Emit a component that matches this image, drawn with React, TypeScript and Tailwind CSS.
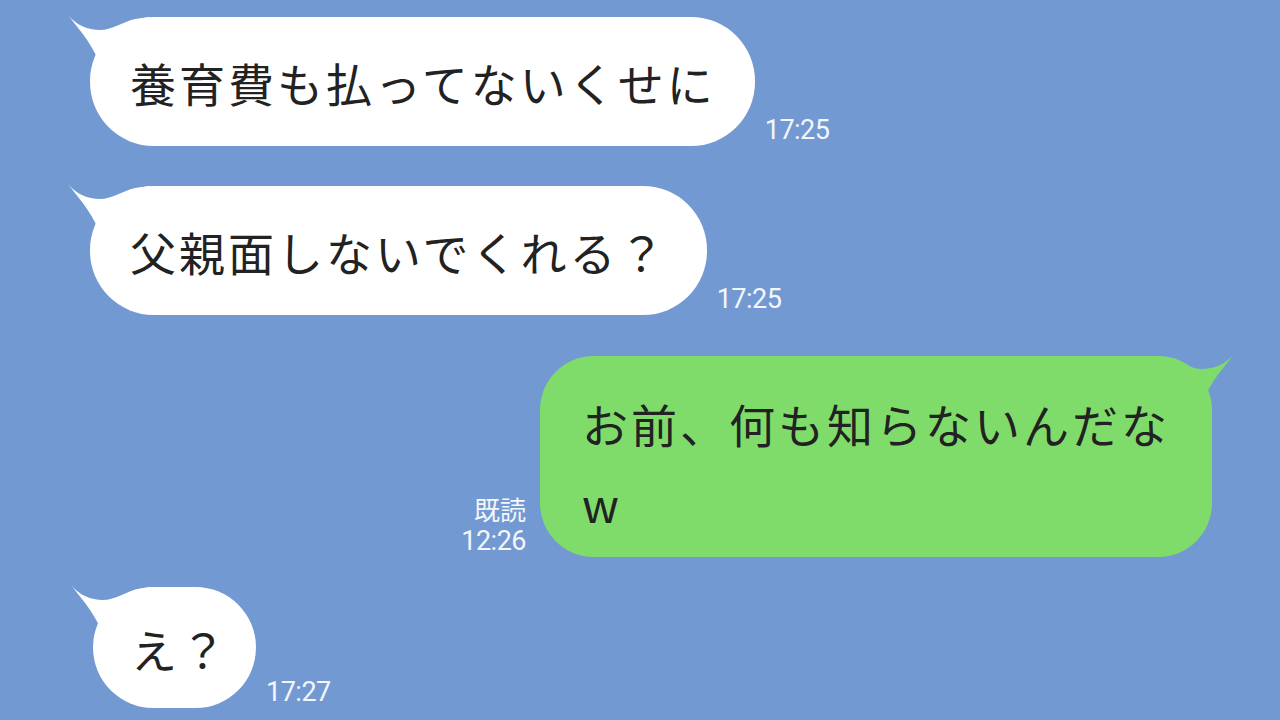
const jp = "font-['Noto_Sans_CJK_JP','Noto_Sans',sans-serif]";
const time = "font-['Roboto','Noto_Sans_CJK_JP',sans-serif] text-[27px] leading-none text-[#f3f6fb] tracking-[-0.5px]";

function Tail({ color, right = false }: { color: string; right?: boolean }) {
  return (
    <svg
      width="100"
      height="70"
      viewBox="-30 -10 100 70"
      className={
        right
          ? "absolute -right-[30px] -top-[10px] -scale-x-100"
          : "absolute -left-[30px] -top-[10px]"
      }
    >
      <path
        d="M-22 -2 C-14 8 -2 13 10 13 C22 13 30 6 45 2 L60 0 L60 50 L10 50 C6 32 -8 16 -22 -2 Z"
        fill={color}
      />
    </svg>
  );
}

function Incoming({ text, at, width }: { text: string; at: string; width?: string }) {
  return (
    <div className="flex items-end">
      <div
        className={`relative flex h-[129px] items-center rounded-[64px] bg-white pl-[40px] pr-[39px] ${width ?? ""}`}
      >
        <Tail color="#ffffff" />
        <span className={`relative ${jp} text-[46px] leading-none tracking-[3px] text-[#222222]`}>
          {text}
        </span>
      </div>
      <span className={`ml-[10px] mb-[2px] ${time}`}>{at}</span>
    </div>
  );
}

export default function App() {
  return (
    <div className="flex h-[720px] w-[1280px] flex-col overflow-hidden bg-[#7399d2]">
      <div className="mt-[17px] pl-[90px]">
        <Incoming text="養育費も払ってないくせに" at="17:25" />
      </div>
      <div className="mt-[40px] pl-[90px]">
        <Incoming text="父親面しないでくれる？" at="17:25" />
      </div>

      {/* my message */}
      <div className="mt-[41px] flex items-end justify-end pr-[68px]">
        <div className={`mr-[14px] flex flex-col items-end text-[26px] leading-[32px] text-[#f3f6fb] ${jp}`}>
          <span>既読</span>
          <span className="font-['Roboto',sans-serif] text-[27px] tracking-[-0.5px]">12:26</span>
        </div>
        <div className="relative h-[201px] w-[672px] rounded-[54px] bg-[#80dc6a] pl-[42px] pt-[27px]">
          <Tail color="#80dc6a" right />
          <p className={`relative ${jp} text-[46px] leading-[80px] tracking-[3px] text-[#222222]`}>
            お前、何も知らないんだな
            <br />w
          </p>
        </div>
      </div>

      <div className="mt-[30px] pl-[93px]">
        <Incoming text="え？" at="17:27" width="w-[163px] !h-[121px] !pl-[38px]" />
      </div>
    </div>
  );
}
